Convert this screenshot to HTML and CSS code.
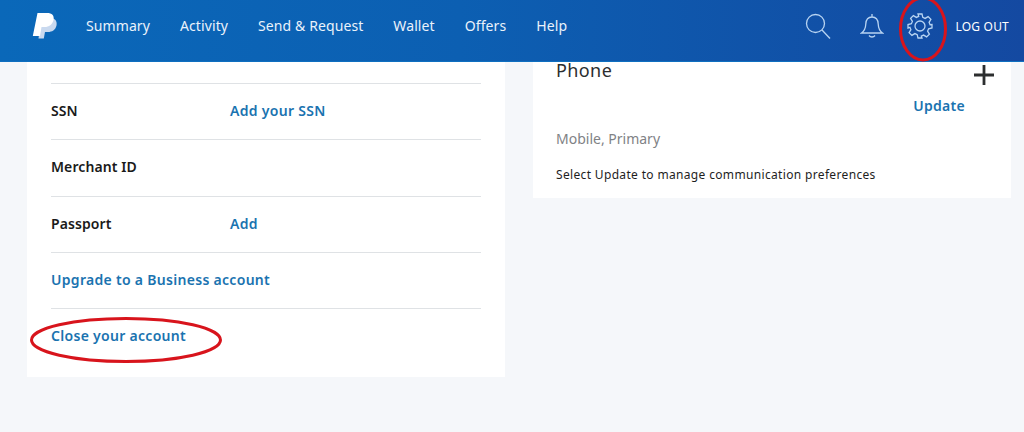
FILE: index.html
```html
<!DOCTYPE html>
<html lang="en">
<head>
<meta charset="utf-8">
<title>PayPal Settings</title>
<link rel="stylesheet" href="styles.css">
</head>
<body>
<header class="topbar">
  <svg class="logo" width="26" height="28" viewBox="0 0 26 28">
    <path class="logo-back" d="M9 6h9c5 0 7.500 3 6.500 7.500C23.500 18 20 20 16 20h-3l-1.200 6.500H6.500z"/>
    <path class="logo-front" d="M5.500 1h9.500c5 0 7.500 2.500 6.500 7-1 4.500-4.500 7-9 7H9.500L8 24H.8z"/>
  </svg>
  <nav class="nav">
    <a>Summary</a><a>Activity</a><a>Send &amp; Request</a><a>Wallet</a><a>Offers</a><a>Help</a>
  </nav>
  <div class="tools">
    <svg class="icon-search" width="26" height="26" viewBox="0 0 26 26"><circle cx="10.500" cy="10.500" r="9"/><path d="M17 17l8 8.500"/></svg>
    <svg class="icon-bell" width="24" height="26" viewBox="0 0 24 26"><path d="M12 1v3M12 4c-4 0-6 3-6.200 7-.2 4-1.300 7-4.300 9h21c-3-2-4.100-5-4.300-9C18 7 16 4 12 4zM9 22.500c1.500 2 4.500 2 6 0"/></svg>
    <svg class="icon-gear" width="26" height="26" viewBox="0 0 26 26"><circle cx="13" cy="13" r="5"/><path d="M11 1h4l.8 3.400 2.300 1 3-1.800 2.800 2.800-1.800 3 1 2.300L25 11.500v3.500l-3.400.8-1 2.300 1.800 3-2.800 2.800-3-1.800-2.300 1L15 25h-4l-.8-3.400-2.300-1-3 1.800L2.100 19.600l1.800-3-1-2.300L1 15v-3.500l3.400-.8 1-2.300-1.800-3 2.800-2.800 3 1.800 2.300-1z"/></svg>
    <a class="logout">LOG OUT</a>
  </div>
</header>
<main class="page">
  <section class="card card-left">
    <div class="row row-first"></div>
    <div class="row"><span class="label">SSN</span><a class="link">Add your SSN</a></div>
    <div class="row"><span class="label">Merchant ID</span></div>
    <div class="row"><span class="label">Passport</span><a class="link">Add</a></div>
    <div class="row"><a class="link">Upgrade to a Business account</a></div>
    <div class="row row-last"><a class="link">Close your account</a></div>
  </section>
  <section class="card card-right">
    <div class="phone-head">
      <h2 class="phone-title">Phone</h2>
      <svg class="plus" width="22" height="22" viewBox="0 0 22 22"><path d="M11 1v20M1 11h20"/></svg>
    </div>
    <a class="link update">Update</a>
    <p class="muted">Mobile, Primary</p>
    <p class="note">Select Update to manage communication preferences</p>
  </section>
</main>
<svg class="mark mark-gear" width="52" height="64" viewBox="0 0 52 64"><ellipse cx="26" cy="29" rx="22.500" ry="31"/></svg>
<svg class="mark mark-close" width="194" height="46" viewBox="0 0 194 46"><ellipse cx="97" cy="23" rx="94.500" ry="21.500"/></svg>
</body>
</html>
```
FILE: styles.css
```css
* { box-sizing: border-box; }
html, body { margin: 0; height: 432px; overflow: hidden; }
body {
  background: #f5f7fa;
  font-family: "Noto Sans", "Open Sans", sans-serif;
  color: #1c1c1c;
  position: relative;
}
.topbar {
  height: 62px;
  display: flex;
  align-items: center;
  padding: 0 15px 9px 32px;
  background: linear-gradient(90deg, #0a68b9 0%, #0c5fb2 45%, #1449a1 100%);
  border-bottom: 1px solid #0f6fc0;
  color: #fff;
}
.logo { flex: none; }
.logo-back { fill: #c9d9ef; }
.logo-front { fill: #fff; }
.nav { display: flex; gap: 30px; margin: 0 0 2px 28px; font-size: 14px; letter-spacing: .1px; color: #eaf2fb; }
.tools { margin-left: auto; display: flex; align-items: center; }
.tools svg { fill: none; stroke: #b8d4f2; stroke-width: 1.300; }
.icon-search { margin-right: 29px; }
.icon-bell { margin-right: 23px; }
.icon-gear { margin-right: 23px; }
.logout { font-size: 12px; font-weight: 400; letter-spacing: .2px; }
.page { display: flex; align-items: flex-start; gap: 28px; padding: 0 13px 0 27px; }
.card { background: #fff; width: 478px; }
.card-left { height: 315px; padding: 0 24px; }
.row {
  height: 56.300px;
  display: flex;
  align-items: center;
  padding-bottom: 2px;
  border-bottom: 1px solid #dfe2e5;
  font-size: 14px;
  font-weight: 600;
  letter-spacing: .1px;
}
.row-first { height: 22px; padding-bottom: 0; }
.row-last { border-bottom: 0; padding-bottom: 4px; }
.label { width: 179px; color: #1a1a1a; }
.link { color: #1a73b0; font-weight: 600; font-size: 14px; letter-spacing: .3px; }
.card-right { height: 136px; padding: 0 23px; }
.phone-head { display: flex; justify-content: space-between; align-items: flex-start; height: 35px; }
.phone-title { margin: -4px 0 0; font-size: 18px; font-weight: 400; letter-spacing: .4px; color: #2c2e2f; }
.plus { fill: none; stroke: #2c2e2f; stroke-width: 2.800; margin: 2px -7px 0 0; }
.update { display: block; text-align: right; padding-right: 23px; line-height: 18px; }
.muted { margin: 14px 0 0; font-size: 14px; line-height: 20px; letter-spacing: 0; color: #7f8285; }
.note { margin: 18px 0 0; font-size: 12px; line-height: 16px; letter-spacing: .34px; color: #1e1e1e; }
.mark { position: absolute; fill: none; stroke: #d8141c; stroke-width: 3; }
.mark-gear { left: 897px; top: 0; }
.mark-close { left: 29px; top: 317px; }
```
